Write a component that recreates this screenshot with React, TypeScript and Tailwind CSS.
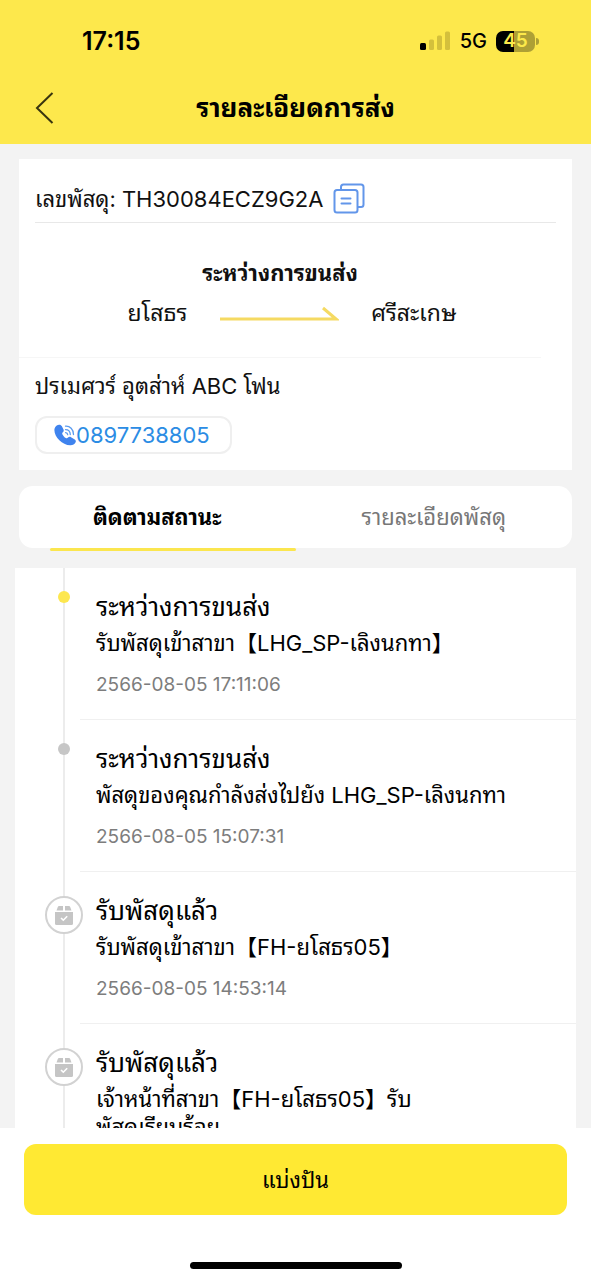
import { useState } from "react";

type TrackEvent = {
  title: string;
  detail: string;
  time?: string;
  marker: "active" | "dot" | "parcel";
};

const events: TrackEvent[] = [
  {
    title: "ระหว่างการขนส่ง",
    detail: "รับพัสดุเข้าสาขา【LHG_SP-เลิงนกทา】",
    time: "2566-08-05 17:11:06",
    marker: "active",
  },
  {
    title: "ระหว่างการขนส่ง",
    detail: "พัสดุของคุณกำลังส่งไปยัง LHG_SP-เลิงนกทา",
    time: "2566-08-05 15:07:31",
    marker: "dot",
  },
  {
    title: "รับพัสดุแล้ว",
    detail: "รับพัสดุเข้าสาขา【FH-ยโสธร05】",
    time: "2566-08-05 14:53:14",
    marker: "parcel",
  },
  {
    title: "รับพัสดุแล้ว",
    detail: "เจ้าหน้าที่สาขา【FH-ยโสธร05】รับ\nพัสดุเรียบร้อย",
    marker: "parcel",
  },
];

function StatusBar() {
  return (
    <div className="flex h-[72px] items-center justify-between pt-[10px] pr-[52px] pl-[82px]">
      <span className="text-[25px] leading-7 font-semibold">17:15</span>
      <div className="flex items-center gap-[9px]">
        <svg width="31" height="20" viewBox="0 0 31 20" aria-hidden="true">
          <rect x="0" y="12" width="6" height="7" rx="1.5" fill="#000" />
          <g fill="#d4c03c">
            <rect x="9" y="8.500" width="5" height="10.500" rx="1.500" />
            <rect x="17" y="4.500" width="5" height="14.500" rx="1.500" />
            <rect x="25" y="0.500" width="5" height="18.500" rx="1.500" />
          </g>
        </svg>
        <span className="text-[20px] leading-6 font-medium">5G</span>
        <div className="flex items-center gap-px">
          <div className="flex h-[21px] w-[39px] items-center justify-center rounded-[7px] bg-linear-to-r from-black from-45% to-[#aea035] to-45% text-[19px] leading-5 font-semibold text-[#fde94a]">
            45
          </div>
          <span className="h-[7px] w-[3px] rounded-r-full bg-[#aea035]" />
        </div>
      </div>
    </div>
  );
}

function CopyIcon() {
  return (
    <svg width="32" height="31" viewBox="0 0 32 31" fill="none" stroke="#6296ea" strokeWidth="2" strokeLinecap="round" strokeLinejoin="round" aria-hidden="true">
      <rect x="1.500" y="7" width="23" height="22.500" rx="2.500" />
      <path d="M8 6.500V4a2.500 2.500 0 0 1 2.500-2.500H28A2.500 2.500 0 0 1 30.500 4v17.500A2.500 2.500 0 0 1 28 24h-3" />
      <path d="M8.500 15.500h9M8.500 20.500h9" />
    </svg>
  );
}

function PhoneIcon() {
  return (
    <svg width="22" height="22" viewBox="0 0 22 22" fill="none" aria-hidden="true">
      <path
        d="M.6 4.400C1.200 2.100 3.300.7 5.200.7c1.300 0 2.200.7 2.700 1.600l1.600 3.100c.5 1.100.2 2.100-.6 2.800-.8.700-.9 1.300-.4 2.200.8 1.600 1.900 2.700 3.300 3.600.8.500 1.500.4 2.200-.4.800-.8 1.900-1 3-.4l3.800 2.300c1 .6 1.300 1.600.8 2.700-.8 1.900-3 3.100-5.400 3C8.400 21.200.4 13 .4 6.200c0-.6 0-1.200.2-1.800Z"
        fill="#3f83ee"
      />
      <path d="M11.500 2.200c4.400-.3 8 3 8 8.300M11.500 5.600c2.700 0 4.700 2 4.800 5M11.600 8.600c1.200.1 2 .9 2.100 2.100" stroke="#5b9bef" strokeWidth="1.300" strokeLinecap="round" />
    </svg>
  );
}

function ParcelIcon() {
  return (
    <svg width="18" height="19" viewBox="0 0 18 19" className="shrink-0" aria-hidden="true">
      <path d="M4 0H8v4.500H1.500L2.800 1Q3.200 0 4 0ZM10 0h4q.8 0 1.200 1l1.300 3.500H10Z" fill="#c5c5c5" />
      <path d="M0 6h18v11.500q0 1.500-1.500 1.500h-15Q0 19 0 17.500Z" fill="#c5c5c5" />
      <path d="m6 12 2.300 2.200 3.900-3.900" fill="none" stroke="#fff" strokeWidth="1.600" />
    </svg>
  );
}

function Marker({ kind }: { kind: TrackEvent["marker"] }) {
  if (kind === "parcel") {
    return (
      <span className="absolute top-6 left-[30px] flex size-[38px] items-center justify-center rounded-full border-2 border-[#d2d2d2] bg-white">
        <ParcelIcon />
      </span>
    );
  }
  return kind === "active" ? (
    <span className="absolute top-[23px] left-[43px] size-3 rounded-full bg-[#fde74f]" />
  ) : (
    <span className="absolute top-[23px] left-[43px] size-3 rounded-full bg-[#c6c6c6]" />
  );
}

function TimelineItem({ event }: { event: TrackEvent }) {
  return (
    <li className="flex">
      <div className="relative w-[65px] shrink-0">
        <span className="absolute inset-y-0 left-12 w-0.5 bg-[#ececec]" />
        <Marker kind={event.marker} />
      </div>
      <div className="min-w-0 flex-1 border-b border-[#f0f0f0] pt-[21px] pb-[22px] pl-4">
        <h2 className="text-[26px] leading-9">{event.title}</h2>
        <p className="mt-1 text-[22px] leading-7 whitespace-pre-line">{event.detail}</p>
        {event.time && (
          <time className="mt-4 block text-[19px] leading-6 text-[#7d7d7d]">{event.time}</time>
        )}
      </div>
    </li>
  );
}

export default function App() {
  const [tab, setTab] = useState(0);

  return (
    <div className="flex h-screen flex-col overflow-hidden bg-[#f3f3f3] font-[Inter,'Noto_Sans_Thai_Looped','Loma','Garuda','Umpush','Waree','Sarabun','Noto_Sans_CJK_SC',sans-serif] text-[#111111]">
      <header className="shrink-0 bg-[#fde84c] text-black">
        <StatusBar />
        <div className="grid h-[72px] grid-cols-[72px_1fr_72px] items-center">
          <button type="button" aria-label="กลับ" className="flex h-full items-center pl-[35px]">
            <svg width="19" height="32" viewBox="0 0 19 32" fill="none" stroke="#39350f" strokeWidth="2" aria-hidden="true">
              <path d="M17.500 1 2 16l15.500 15" />
            </svg>
          </button>
          <h1 className="text-center text-[26px] leading-9 font-bold">รายละเอียดการส่ง</h1>
        </div>
      </header>

      <main className="flex min-h-0 flex-1 flex-col">
        <section className="mx-[19px] mt-[15px] shrink-0 bg-white pb-4">
          <div className="mx-4 flex h-16 items-center gap-[10px] border-b border-[#e8e8e8] pt-4">
            <p className="text-[22px] leading-8">เลขพัสดุ: TH30084ECZ9G2A</p>
            <button type="button" aria-label="คัดลอก">
              <CopyIcon />
            </button>
          </div>
          <div className="mr-[31px] border-b border-[#f6f6f6] pt-8 pb-[26px]">
            <p className="text-center text-[22px] leading-9 font-bold">ระหว่างการขนส่ง</p>
            <div className="mt-1 flex items-center justify-center gap-8 pl-6 text-[23px] leading-9">
              <span>ยโสธร</span>
              <svg width="120" height="18" viewBox="0 0 120 18" fill="none" aria-hidden="true">
                <path d="M1 15h116L104 4" stroke="#f5da62" strokeWidth="3" />
              </svg>
              <span>ศรีสะเกษ</span>
            </div>
          </div>
          <div className="px-4 pt-[10px]">
            <p className="text-[22px] leading-9">ปรเมศวร์ อุตส่าห์ ABC โฟน</p>
            <a
              href="tel:0897738805"
              className="mt-3 flex h-[38px] w-fit items-center rounded-xl border-2 border-[#efefef] pr-5 pl-[17px] text-[22px] leading-7 text-[#2b8ce4]"
            >
              <PhoneIcon />
              0897738805
            </a>
          </div>
        </section>

        <div role="tablist" className="mx-[19px] mt-4 grid h-[62px] shrink-0 grid-cols-2 rounded-[14px] bg-white">
          {["ติดตามสถานะ", "รายละเอียดพัสดุ"].map((label, i) => (
            <button
              key={label}
              type="button"
              role="tab"
              aria-selected={tab === i}
              onClick={() => setTab(i)}
              className={
                tab === i
                  ? "relative text-[22px] leading-8 font-bold text-black"
                  : "relative text-[22px] leading-8 text-[#777777]"
              }
            >
              {label}
              {tab === i && (
                <span className="absolute right-0 -bottom-[3px] left-[31px] h-[3px] rounded-full bg-[#fbe64f]" />
              )}
            </button>
          ))}
        </div>

        <ol className="mx-[15px] mt-5 min-h-0 flex-1 overflow-hidden bg-white text-black">
          {events.map((event, i) => (
            <TimelineItem key={i} event={event} />
          ))}
        </ol>
      </main>

      <footer className="flex shrink-0 flex-col items-center bg-white px-6 pt-4 pb-[11px]">
        <button type="button" className="h-[71px] w-full rounded-xl bg-[#ffe933] text-[22px] leading-8 text-black">
          แบ่งปัน
        </button>
        <span className="mt-[47px] h-[7px] w-[212px] rounded-full bg-black" />
      </footer>
    </div>
  );
}
